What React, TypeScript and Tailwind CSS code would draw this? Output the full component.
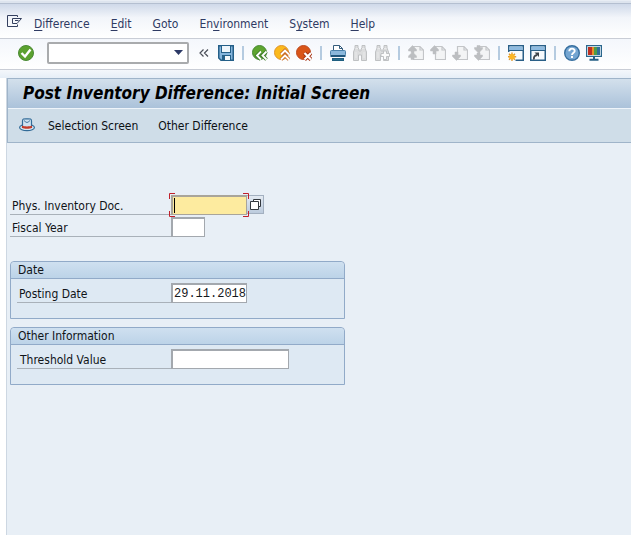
import React from "react";

type IconProps = { children: React.ReactNode };

function Icon({ children }: IconProps) {
  return (
    <svg width="16" height="16" viewBox="0 0 16 16" fill="none" className="block shrink-0" aria-hidden="true">
      {children}
    </svg>
  );
}

function ToolButton({ label, children, disabled }: { label: string; children: React.ReactNode; disabled?: boolean }) {
  return (
    <button type="button" aria-label={label} disabled={disabled} className="flex size-4 shrink-0 items-center justify-center">
      {children}
    </button>
  );
}

function Separator() {
  return (
    <div className="flex w-1.5 shrink-0 justify-center">
      <div className="h-3.5 w-0.5 bg-[#b5cbe0]" />
    </div>
  );
}

const SheetShape = "M5.5 1.5H12L15.5 5V14.5H5.5V1.5ZM12 1.5V5H15.5";

function Sheet({ arrows }: { arrows: string }) {
  return (
    <Icon>
      <path d={SheetShape} fill="#f3f4f5" stroke="#c3c5c8" strokeWidth="1.2" />
      <path d={arrows} fill="#bcbec1" stroke="#bcbec1" strokeWidth="0.5" />
    </Icon>
  );
}

function Binoculars({ plus }: { plus?: boolean }) {
  return (
    <Icon>
      <path
        d="M3 0.5H6V3L7 4V6H9V4L10 3V0.5H13V3L14.5 7V15.5H9.5V10H6.5V15.5H1.5V7L3 3Z"
        fill="#dcddde"
        stroke="#bfc1c3"
      />
      <path d="M3.5 3.5H6M10 3.5H12.5M4 7V13M12 7V13" stroke="#e9eaeb" />
      {plus && <path d="M9.5 6H12.5V8.5H15.5V11.5H12.5V14.5H9.5V11.5H7V8.5H9.5Z" fill="#fafafa" stroke="#bfc1c3" />}
    </Icon>
  );
}

function WindowFrame() {
  return (
    <>
      <rect x="0.75" y="0.75" width="14.5" height="14.5" fill="#f7fafd" stroke="#2a5f87" strokeWidth="1.5" />
      <rect x="1.5" y="1.5" width="13" height="3.5" fill="#8fbbe0" />
      <path d="M1 5.5H15" stroke="#2a5f87" />
    </>
  );
}

const menus: [string, string, string][] = [
  ["", "D", "ifference"],
  ["", "E", "dit"],
  ["", "G", "oto"],
  ["En", "v", "ironment"],
  ["S", "y", "stem"],
  ["", "H", "elp"],
];

function MenuBar() {
  return (
    <nav className="flex h-[35px] items-center gap-3 border-b border-[#c9cdd6] bg-linear-to-b from-[#cfd9e9] via-[#f2f5fa] via-40% to-white pt-1.5 pl-1.5 text-[#2f3b63]">
      <button type="button" aria-label="Menu" className="mb-1.5 shrink-0">
        <svg width="16" height="12" viewBox="0 0 16 12" fill="none" stroke="#34405f" className="block" aria-hidden="true">
          <path d="M11.5 2V0.5H1.5V11.5H11.5V9.5" />
          <path d="M15.5 3.5H6.5V8.5H11L15.5 3.5ZM9 5.5H12.5" />
        </svg>
      </button>
      <div className="flex gap-[21px]">
        {menus.map(([before, key, after]) => (
          <button type="button" key={before + key + after} className="whitespace-nowrap">
            {before}
            <span className="underline underline-offset-2">{key}</span>
            {after}
          </button>
        ))}
      </div>
    </nav>
  );
}

function Toolbar() {
  return (
    <div className="flex h-[31px] items-center gap-1.5 border-b border-[#c9cdd6] bg-linear-to-b from-[#f4f7fc] to-white pb-0.5 pl-[18px]">
      <ToolButton label="Enter">
        <Icon>
          <circle cx="8" cy="8" r="7.5" fill="#5ba12f" stroke="#4a8a35" />
          <path d="M3.5 8L7 11.5L12.5 4.5" stroke="white" strokeWidth="2.4" />
        </Icon>
      </ToolButton>
      <div className="relative mr-px ml-[7px] h-[22px] w-[142px] shrink-0">
        <input aria-label="Command" className="size-full rounded-xs border-2 border-[#a9abad] bg-white px-1 outline-none" />
        <svg width="9" height="5" viewBox="0 0 9 5" className="pointer-events-none absolute top-2 right-1.5" aria-hidden="true">
          <path d="M0 0H9L4.5 5Z" fill="#2c3966" />
        </svg>
      </div>
      <ToolButton label="Collapse">
        <svg width="10" height="8" viewBox="0 0 10 8" fill="none" stroke="#4b4f58" strokeWidth="1.2" aria-hidden="true">
          <path d="M4.5 0.5L1 4L4.5 7.5M9 0.5L5.5 4L9 7.5" />
        </svg>
      </ToolButton>
      <ToolButton label="Save">
        <Icon>
          <path d="M0.75 0.75H15.25V15.25H3L0.75 13Z" fill="#84b4dc" stroke="#245f88" strokeWidth="1.5" />
          <rect x="3.5" y="0.5" width="9" height="7" fill="#eef5fb" stroke="#245f88" />
          <rect x="4.5" y="10.5" width="8" height="5" fill="#f3f7fa" stroke="#245f88" />
          <path d="M6 11V15" stroke="#245f88" strokeWidth="2" />
        </Icon>
      </ToolButton>
      <Separator />
      <ToolButton label="Back">
        <Icon>
          <circle cx="7.5" cy="7.5" r="7" fill="#5ea52f" stroke="#478a34" />
          <path d="M9 6.5L5 10.5L9 14.5M14.5 6.5L10.5 10.5L14.5 14.5" stroke="#3f7c2b" strokeWidth="3.6" />
          <path d="M9 6.5L5 10.5L9 14.5M14.5 6.5L10.5 10.5L14.5 14.5" stroke="white" strokeWidth="1.8" />
        </Icon>
      </ToolButton>
      <ToolButton label="Exit">
        <Icon>
          <circle cx="7.5" cy="7.5" r="7" fill="#fbb91c" stroke="#e0942a" />
          <path d="M7 9.5L11 5.5L15 9.5M7 14.5L11 10.5L15 14.5" stroke="#c96b25" strokeWidth="3.6" />
          <path d="M7 9.5L11 5.5L15 9.5M7 14.5L11 10.5L15 14.5" stroke="white" strokeWidth="1.8" />
        </Icon>
      </ToolButton>
      <ToolButton label="Cancel">
        <Icon>
          <circle cx="7.5" cy="7.5" r="7" fill="#d95518" stroke="#bd4a20" />
          <path d="M8.5 8L15 14.5M15 8L8.5 14.5" stroke="#a53212" strokeWidth="4" />
          <path d="M8.5 8L15 14.5M15 8L8.5 14.5" stroke="white" strokeWidth="2.2" />
        </Icon>
      </ToolButton>
      <Separator />
      <ToolButton label="Print">
        <Icon>
          <path d="M3.5 6V0.5H9.5L12.5 3.5V6" fill="white" stroke="#355c7c" />
          <path d="M9.5 0.5V3.5H12.5" stroke="#355c7c" />
          <rect x="0.5" y="5.5" width="15" height="5" rx="1" fill="#8bb8dc" stroke="#4b82ab" />
          <path d="M0.5 11H15.5" stroke="#1f567c" strokeWidth="2" />
          <rect x="2.5" y="13.5" width="11" height="2" fill="#2c7191" stroke="#1f5f80" />
        </Icon>
      </ToolButton>
      <ToolButton label="Find" disabled>
        <Binoculars />
      </ToolButton>
      <ToolButton label="Find next" disabled>
        <Binoculars plus />
      </ToolButton>
      <Separator />
      <ToolButton label="First page" disabled>
        <Sheet arrows="M4.5 0.5L8.5 4.5V6H6V7.5H3V6H0.5V4.5ZM4.5 7L8.5 11V12.5H6V14.5H3V12.5H0.5V11Z" />
      </ToolButton>
      <ToolButton label="Previous page" disabled>
        <Sheet arrows="M4.5 0.5L8.5 4.5V6H6V9H3V6H0.5V4.5Z" />
      </ToolButton>
      <ToolButton label="Next page" disabled>
        <Sheet arrows="M3 7H6V10H8.5V11.5L4.5 15.5L0.5 11.5V10H3Z" />
      </ToolButton>
      <ToolButton label="Last page" disabled>
        <Sheet arrows="M3 0.5H6V2.5H8.5V4L4.5 8L0.5 4V2.5H3ZM3 8H6V10H8.5V11.5L4.5 15.5L0.5 11.5V10H3Z" />
      </ToolButton>
      <Separator />
      <ToolButton label="New session">
        <Icon>
          <WindowFrame />
          <rect x="0" y="7" width="7.5" height="9" fill="#f8fafd" />
          <path d="M4 7.5V16M0 11.8H8.2M1 8.8L7 14.8M7 8.8L1 14.8" stroke="#e39a2c" strokeWidth="1.4" />
          <circle cx="4" cy="11.8" r="2.7" fill="#fbb624" />
        </Icon>
      </ToolButton>
      <ToolButton label="Create shortcut">
        <Icon>
          <WindowFrame />
          <path d="M4 14.5C3.5 12 4.5 10.5 7 10" stroke="#3c4248" strokeWidth="1.8" />
          <path d="M4.5 7.5H9V12Z" fill="#3c4248" />
        </Icon>
      </ToolButton>
      <Separator />
      <ToolButton label="Help">
        <Icon>
          <circle cx="8" cy="8" r="7.3" fill="#74a5d1" stroke="#376f9f" strokeWidth="1.4" />
          <path d="M5.3 6.3C5.3 2.7 10.7 2.8 10.7 6C10.7 7.8 8 7.8 8 10" stroke="white" strokeWidth="1.9" />
          <rect x="7" y="11" width="2" height="2" fill="white" />
        </Icon>
      </ToolButton>
      <ToolButton label="Customize local layout">
        <Icon>
          <rect x="0.6" y="0.6" width="14.8" height="10.8" fill="#e8f2f9" stroke="#2a668c" strokeWidth="1.2" />
          <rect x="2" y="2" width="4" height="8" fill="#bd2f20" />
          <rect x="6" y="2" width="2" height="8" fill="#e88f2a" />
          <rect x="8" y="2" width="3" height="8" fill="#4c9c4b" />
          <rect x="11" y="2" width="3" height="8" fill="#2f6f98" />
          <path d="M8 11.5V14.5M3.5 14.8H12.5" stroke="#245f85" strokeWidth="2" />
        </Icon>
      </ToolButton>
    </div>
  );
}

const fieldBox = "h-5 shrink-0 border border-t-2 border-l-2 border-[#a3a8ae] bg-white pl-px font-['Liberation_Mono',monospace] text-xs outline-none";

function FieldRow({
  id,
  label,
  labelClass,
  children,
}: {
  id: string;
  label: string;
  labelClass: string;
  children: React.ReactNode;
}) {
  return (
    <div className="flex h-5">
      <label htmlFor={id} className={"flex shrink-0 items-center border-b border-[#a9b1b9] pt-0.5 whitespace-nowrap " + labelClass}>
        {label}
      </label>
      {children}
    </div>
  );
}

function Group({ title, children }: { title: string; children: React.ReactNode }) {
  return (
    <section className="w-[335px] rounded-t-sm border border-[#91aac8] bg-[#dee9f3] text-[#101418]">
      <h2 className="flex h-[17px] items-center rounded-t-sm border-b border-[#91aac8] bg-linear-to-b from-[#cfe0f0] to-[#bcd3e8] pl-[7px]">
        {title}
      </h2>
      <div className="pt-1 pb-[15px] pl-1.5">{children}</div>
    </section>
  );
}

export default function App() {
  return (
    <div className="flex min-h-screen flex-col overflow-hidden bg-white font-['DejaVu_Sans_Condensed','DejaVu_Sans',sans-serif] text-xs leading-4">
      <div className="h-1 border-y border-t-[#e8edf4] border-b-[#b4bfd0] bg-[#dde4ee]" />
      <MenuBar />
      <Toolbar />
      <div className="h-2 bg-linear-to-b from-[#f4f7fb] to-[#e6eef7]" />
      <main className="ml-1.5 flex-1 border-l border-[#cdd7e2] bg-[#e8eff6]">
        <header className="border-y border-l border-[#9fb4c9]">
          <h1 className="flex h-[30px] items-center border-b border-[#eef4fa] bg-linear-to-b from-[#d3e0ec] to-[#abc2da] pb-0.5 pl-[15px] text-[17px] font-bold whitespace-nowrap text-black italic">
            Post Inventory Difference: Initial Screen
          </h1>
          <div className="flex h-[33px] items-center bg-[#cfdde8] pl-[11px] text-[#0c1014]">
            <button type="button" aria-label="Get selection" className="mr-[13px]">
              <Icon>
                <ellipse cx="8" cy="9.5" rx="7.4" ry="3.2" fill="#d9e8f3" stroke="#326b97" strokeWidth="1.2" />
                <path d="M3.5 9.5V3C3.5 0.5 5 0.8 8 0.8S12.5 0.5 12.5 3V9.5Z" fill="#cfe2f1" stroke="#326b97" strokeWidth="1.2" />
                <path d="M5.5 2.5C6 5 10 5 10.5 2.5" stroke="#326b97" />
                <path d="M3 7.5C5 8.7 11 8.7 13 7.5V9.8C11 11.2 5 11.2 3 9.8Z" fill="#c43b2a" />
              </Icon>
            </button>
            <button type="button" className="mr-5">Selection Screen</button>
            <button type="button">Other Difference</button>
          </div>
        </header>
        <form className="pt-[52px] pl-[3px]" onSubmit={(e) => e.preventDefault()}>
          <div className="flex flex-col gap-0.5 text-[#101418]">
            <FieldRow id="doc" label="Phys. Inventory Doc." labelClass="w-[161px] pl-0.5">
              <div className="relative z-10 h-5 w-[76px] shrink-0">
                <input id="doc" className="size-full border border-t-2 border-l-2 border-[#a9a59a] bg-[#fdeb9f] px-1 outline-none" />
                <span className="pointer-events-none absolute top-[3px] left-[3px] h-[15px] w-px bg-black" />
                <svg
                  width="80"
                  height="24"
                  viewBox="0 0 80 24"
                  fill="none"
                  stroke="#c0202a"
                  className="pointer-events-none absolute -top-0.5 -left-0.5 max-w-none"
                  aria-hidden="true"
                >
                  <path d="M0.5 6V0.5H6M74 0.5H79.5V6M0.5 18V23.5H6M74 23.5H79.5V18" />
                </svg>
              </div>
              <button
                type="button"
                aria-label="Search help"
                className="flex h-[19px] w-[17px] shrink-0 items-center justify-center border border-l-0 border-[#a3b0c0] bg-linear-to-b from-[#e3eaf2] to-[#bccbdd]"
              >
                <svg width="11" height="11" viewBox="0 0 11 11" fill="white" stroke="#33383e" aria-hidden="true">
                  <path d="M3.5 0.5H10.5V7.5H3.5Z" />
                  <path d="M0.5 2.5H8.5V10.5H0.5Z" />
                </svg>
              </button>
            </FieldRow>
            <FieldRow id="year" label="Fiscal Year" labelClass="w-[161px] pl-0.5">
              <input id="year" className={fieldBox + " w-[34px]"} />
            </FieldRow>
          </div>
          <div className="mt-6 flex flex-col gap-2">
            <Group title="Date">
              <FieldRow id="posting" label="Posting Date" labelClass="w-[154px] pl-0.5">
                <input id="posting" defaultValue="29.11.2018" className={fieldBox + " w-[76px] text-[#15181c]"} />
              </FieldRow>
            </Group>
            <Group title="Other Information">
              <FieldRow id="threshold" label="Threshold Value" labelClass="w-[154px] pl-[3px]">
                <input id="threshold" className={fieldBox + " w-[118px]"} />
              </FieldRow>
            </Group>
          </div>
        </form>
      </main>
    </div>
  );
}
